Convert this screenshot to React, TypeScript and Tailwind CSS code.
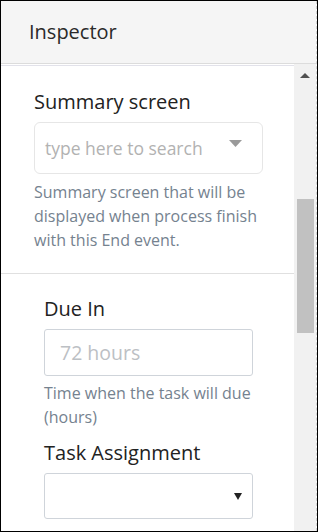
function Label({ children }: { children: React.ReactNode }) {
  return <div className="text-[20px] leading-[28px] text-[#222]">{children}</div>
}

function Help({ children }: { children: React.ReactNode }) {
  return <div className="text-[16px] leading-[24px] text-[#75828f]">{children}</div>
}

export default function App() {
  return (
    <div
      className="w-[318px] h-[532px] border border-black bg-white overflow-hidden"
      style={{ fontFamily: '"Open Sans", "Liberation Sans", sans-serif' }}
    >
      <div className="h-full flex flex-col border-r border-dashed border-[#d4d4d4]">
        {/* Header */}
        <div className="h-[63px] shrink-0 bg-[#f5f5f5] border-b border-[#dcdcdc] flex items-center pl-[28px] text-[20px] text-[#2a2a2a]">
          Inspector
        </div>

        <div className="flex-1 flex min-h-0">
          {/* Scrolled content */}
          <div className="flex-1 min-w-0 pt-px">
            <div className="border-t border-[#e2e2ea]">
              {/* Summary screen */}
              <div className="pl-[33px] pr-[29px] pt-[22px] pb-[21px] border-b border-[#e0e0e0]">
                <Label>Summary screen</Label>
                <div className="mt-[6px] h-[52px] w-[229px] rounded-[6px] border border-[#e6e6e6] flex items-center justify-between pl-[10px] pr-[20px]">
                  <span className="text-[17.5px] text-[#b2b2b2]">type here to search</span>
                  <svg width="13" height="8" viewBox="0 0 13 8" className="mb-[8px]">
                    <path d="M0 0h13L6.5 7z" fill="#9a9a9a" />
                  </svg>
                </div>
                <div className="mt-[6px]">
                  <Help>
                    Summary screen that will be
                    <br />
                    displayed when process finish
                    <br />
                    with this End event.
                  </Help>
                </div>
              </div>

              {/* Task settings */}
              <div className="pl-[43px] pt-[21px]">
                <Label>Due In</Label>
                <div className="mt-[6px] h-[47px] w-[209px] rounded-[3px] border border-[#cfd4da] flex items-center pl-[15px]">
                  <span className="text-[19.5px] text-[#bcc0c4]">72 hours</span>
                </div>
                <div className="mt-[5px]">
                  <Help>
                    Time when the task will due
                    <br />
                    (hours)
                  </Help>
                </div>
                <div className="mt-[10px]">
                  <Label>Task Assignment</Label>
                </div>
                <div className="mt-[6px] h-[46px] w-[209px] rounded-[3px] border border-[#cfd4da] flex items-center justify-end pr-[10px]">
                  <svg width="8" height="7" viewBox="0 0 8 7">
                    <path d="M0 0h8L4 7z" fill="#222" />
                  </svg>
                </div>
              </div>
            </div>
          </div>

          {/* Scrollbar */}
          <div className="w-[22px] shrink-0 bg-[#f1f1f1] flex flex-col items-center">
            <svg width="10" height="5" viewBox="0 0 10 5" className="mt-[9px]">
              <path d="M0 5h10L5 0z" fill="#505050" />
            </svg>
            <div className="mt-[121px] w-[17px] h-[134px] bg-[#c1c1c1]" />
          </div>
        </div>
      </div>
    </div>
  )
}
